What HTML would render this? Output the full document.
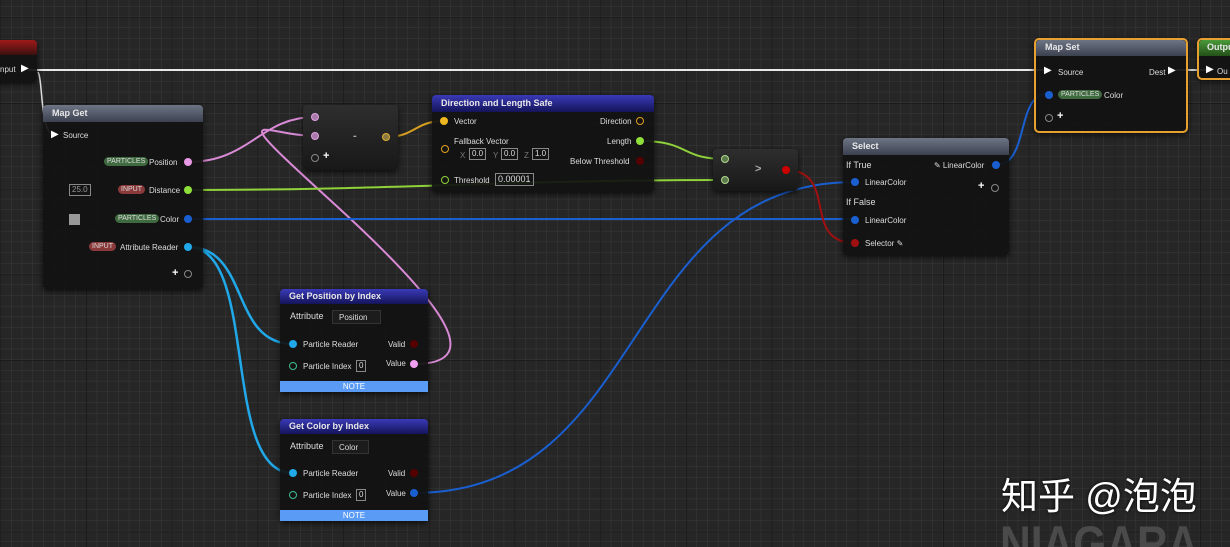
<!DOCTYPE html>
<html><head><meta charset="utf-8"><style>
*{margin:0;padding:0;box-sizing:border-box}
html{width:1230px;height:547px;overflow:hidden}
body{width:1230px;height:547px;overflow:hidden;background:#262626;font-family:"Liberation Sans",sans-serif;position:relative}
svg.bg{position:absolute;left:0;top:0}
.n{position:absolute;background:rgba(18,18,18,.93);border-radius:4px;box-shadow:0 2px 6px rgba(0,0,0,.7);color:#ddd;font-size:8px}
.h{height:17px;border-radius:4px 4px 0 0;font-size:9px;font-weight:bold;color:#e8e8e8;padding:3px 0 0 9px}
.hg{background:linear-gradient(#6d7585,#3c4150)}
.hb{background:linear-gradient(#3a3ab8,#14145a)}
.t{position:absolute;white-space:nowrap;font-size:8px;color:#ddd}
.tag{position:absolute;font-size:7px;border-radius:6px;padding:1px 3px;color:#ddd}
.tg{background:#3f6a3f}.tr{background:#8a3a3a}
.pin{position:absolute;width:8px;height:8px;border-radius:50%}
.box{position:absolute;border:1px solid #888;font-size:8px;color:#ddd;padding:0 2px;height:12px;line-height:10px}
.note{position:absolute;left:0;right:0;height:11px;background:#5a9cf5;color:#fff;font-size:8px;text-align:center;line-height:11px}
</style></head><body>
<svg class="bg" width="1230" height="547">
<defs>
<pattern id="mi" width="10.71" height="10.71" patternUnits="userSpaceOnUse" x="0.3" y="6">
<path d="M0 0H10.71M0 0V10.71" stroke="#3a3a3a" stroke-width="1" fill="none"/></pattern>
<pattern id="ma" width="85.7" height="85.7" patternUnits="userSpaceOnUse" x="0.3" y="17.3">
<path d="M0 0H85.7M0 0V85.7" stroke="#141414" stroke-width="1.3" fill="none"/></pattern>
</defs>
<rect width="1230" height="547" fill="#262626"/>
<rect width="1230" height="547" fill="url(#mi)"/>
<rect width="1230" height="547" fill="url(#ma)"/>
<g fill="none" stroke-width="2">
<path d="M28 70H1045" stroke="#e8e8e8"/>
<path d="M38 72C43 80 40 130 53 135" stroke="#ddd" stroke-width="1.5"/>
<path d="M1176 70H1210" stroke="#ddd"/>
<path d="M188 162C250 162 260 117 315 117" stroke="#d98ad6"/>
<path d="M414 364C490 364 440 300 330 200S265 136 315 136" stroke="#d98ad6"/>
<path d="M386 137C415 137 415 121 444 121" stroke="#d8a020"/>
<path d="M188 190C400 190 500 180 725 180" stroke="#8fd23a"/>
<path d="M640 141C690 141 680 159 725 159" stroke="#8fd23a"/>
<path d="M188 219H855" stroke="#1a5fd0"/>
<path d="M414 493C650 493 620 182 855 182" stroke="#1a5fd0"/>
<path d="M996 165C1030 165 1015 93 1049 93" stroke="#1a5fd0"/>
<path d="M188 247C250 247 230 344 293 344" stroke="#20a8e8" stroke-width="2.5"/>
<path d="M188 247C260 247 220 473 293 473" stroke="#20a8e8" stroke-width="2.5"/>
<path d="M785 170C840 170 800 243 855 243" stroke="#a01010"/>
</g>
</svg>

<div class="n" style="left:-10px;top:40px;width:47px;height:42px"><div class="h" style="background:linear-gradient(#a01a1a,#3a1010);height:15px"></div>
<div class="t" style="left:10px;top:25px">nput</div><div class="t" style="left:31px;top:23px;color:#fff;font-size:10px">▶</div></div>

<div class="n" style="left:43px;top:105px;width:160px;height:184px"><div class="h hg">Map Get</div>
<div class="t" style="left:8px;top:24px;color:#fff;font-size:10px">▶</div><div class="t" style="left:20px;top:26px">Source</div>
<div class="tag tg" style="left:61px;top:52px">PARTICLES</div><div class="t" style="left:106px;top:53px">Position</div><div class="pin" style="left:141px;top:53px;background:#e89ae6"></div>
<div class="box" style="left:26px;top:79px;color:#999">25.0</div>
<div class="tag tr" style="left:75px;top:80px">INPUT</div><div class="t" style="left:106px;top:81px">Distance</div><div class="pin" style="left:141px;top:81px;background:#8fe03a"></div>
<div style="position:absolute;left:26px;top:109px;width:11px;height:11px;background:#999"></div>
<div class="tag tg" style="left:72px;top:109px">PARTICLES</div><div class="t" style="left:117px;top:110px">Color</div><div class="pin" style="left:141px;top:110px;background:#1a5fd0"></div>
<div class="tag tr" style="left:46px;top:137px">INPUT</div><div class="t" style="left:77px;top:138px">Attribute Reader</div><div class="pin" style="left:141px;top:138px;background:#20a8e8"></div>
<div class="t" style="left:129px;top:162px;color:#fff;font-size:11px;font-weight:bold">+</div><div class="pin" style="left:141px;top:165px;border:1px solid #888"></div>
</div>

<div class="n" style="left:303px;top:105px;width:95px;height:65px;background:linear-gradient(#2e2e2e,#181818)">
<div class="pin" style="left:8px;top:8px;background:#a878a8;border:1px solid #e0a0e0"></div>
<div class="pin" style="left:8px;top:27px;background:#a878a8;border:1px solid #e0a0e0"></div>
<div class="t" style="left:50px;top:25px;font-size:11px;font-weight:bold;color:#aaa">-</div>
<div class="pin" style="left:79px;top:28px;background:#8a7840;border:1px solid #e0b030"></div>
<div class="pin" style="left:8px;top:49px;border:1px solid #888"></div><div class="t" style="left:20px;top:45px;color:#fff;font-size:11px;font-weight:bold">+</div>
</div>

<div class="n" style="left:432px;top:95px;width:222px;height:97px"><div class="h hb">Direction and Length Safe</div>
<div class="pin" style="left:8px;top:22px;background:#f0b820"></div><div class="t" style="left:22px;top:22px">Vector</div>
<div class="t" style="left:22px;top:42px">Fallback Vector</div><div class="pin" style="left:9px;top:50px;border:1.5px solid #e0a020"></div>
<div class="t" style="left:28px;top:56px;color:#777">X</div><div class="box" style="left:37px;top:53px">0.0</div>
<div class="t" style="left:61px;top:56px;color:#777">Y</div><div class="box" style="left:69px;top:53px">0.0</div>
<div class="t" style="left:92px;top:56px;color:#777">Z</div><div class="box" style="left:100px;top:53px">1.0</div>
<div class="pin" style="left:9px;top:81px;border:1.5px solid #8fd23a"></div><div class="t" style="left:22px;top:81px">Threshold</div><div class="box" style="left:63px;top:78px;height:13px;font-size:9px">0.00001</div>
<div class="t" style="left:168px;top:22px">Direction</div><div class="pin" style="left:204px;top:22px;border:1.5px solid #e0a020"></div>
<div class="t" style="left:175px;top:42px">Length</div><div class="pin" style="left:204px;top:42px;background:#8fe03a"></div>
<div class="t" style="left:138px;top:62px">Below Threshold</div><div class="pin" style="left:204px;top:62px;background:#500"></div>
</div>

<div class="n" style="left:713px;top:149px;width:85px;height:42px;background:linear-gradient(#2e2e2e,#181818)">
<div class="pin" style="left:8px;top:6px;background:#5a7a4a;border:1px solid #b0d890"></div>
<div class="pin" style="left:8px;top:27px;background:#5a7a4a;border:1px solid #b0d890"></div>
<div class="t" style="left:42px;top:14px;font-size:11px;font-weight:bold;color:#aaa">&gt;</div>
<div class="pin" style="left:69px;top:17px;background:#c00"></div>
</div>

<div class="n" style="left:843px;top:138px;width:166px;height:117px"><div class="h hg">Select</div>
<div class="t" style="left:3px;top:22px;font-size:9px">If True</div>
<div class="pin" style="left:8px;top:40px;background:#1a5fd0"></div><div class="t" style="left:22px;top:40px">LinearColor</div>
<div class="t" style="left:3px;top:59px;font-size:9px">If False</div>
<div class="pin" style="left:8px;top:78px;background:#1a5fd0"></div><div class="t" style="left:22px;top:78px">LinearColor</div>
<div class="pin" style="left:8px;top:101px;background:#a01010"></div><div class="t" style="left:22px;top:101px">Selector ✎</div>
<div class="t" style="left:91px;top:23px">✎ LinearColor</div><div class="pin" style="left:149px;top:23px;background:#1a5fd0"></div>
<div class="t" style="left:135px;top:42px;color:#fff;font-size:11px;font-weight:bold">+</div><div class="pin" style="left:148px;top:46px;border:1px solid #888"></div>
</div>

<div class="n" style="left:1034px;top:38px;width:154px;height:95px;border:2px solid #e8a030;border-radius:5px"><div class="h hg" style="height:16px;padding-top:2px">Map Set</div>
<div class="t" style="left:8px;top:25px;color:#fff;font-size:10px">▶</div><div class="t" style="left:22px;top:28px">Source</div>
<div class="t" style="left:113px;top:28px">Dest</div><div class="t" style="left:132px;top:25px;color:#fff;font-size:10px">▶</div>
<div class="pin" style="left:9px;top:51px;background:#1a5fd0"></div><div class="tag tg" style="left:22px;top:50px">PARTICLES</div><div class="t" style="left:68px;top:51px">Color</div>
<div class="pin" style="left:9px;top:74px;border:1px solid #888"></div><div class="t" style="left:21px;top:70px;color:#fff;font-size:11px;font-weight:bold">+</div>
</div>

<div class="n" style="left:1197px;top:38px;width:40px;height:42px;border:2px solid #e8a030;border-radius:5px"><div class="h" style="background:linear-gradient(#4a9a3a,#245018);height:16px;padding:2px 0 0 8px">Outpu</div>
<div class="t" style="left:7px;top:24px;color:#fff;font-size:10px">▶</div><div class="t" style="left:18px;top:27px">Ou</div></div>

<div class="n" style="left:280px;top:289px;width:148px;height:103px"><div class="h hb" style="height:15px;padding-top:2px">Get Position by Index</div>
<div class="t" style="left:10px;top:22px;font-size:9px">Attribute</div><div class="box" style="left:52px;top:21px;height:14px;width:49px;border-color:#333;background:#1c1c1c;padding:2px 6px">Position</div>
<div class="pin" style="left:9px;top:51px;background:#20a8e8"></div><div class="t" style="left:23px;top:51px">Particle Reader</div>
<div class="pin" style="left:9px;top:73px;border:1.5px solid #40c090"></div><div class="t" style="left:23px;top:73px">Particle Index</div><div class="box" style="left:76px;top:71px">0</div>
<div class="t" style="left:108px;top:51px">Valid</div><div class="pin" style="left:130px;top:51px;background:#500"></div>
<div class="t" style="left:106px;top:70px">Value</div><div class="pin" style="left:130px;top:71px;background:#f0a0ee"></div>
<div class="note" style="top:92px">NOTE</div>
</div>

<div class="n" style="left:280px;top:419px;width:148px;height:102px"><div class="h hb" style="height:15px;padding-top:2px">Get Color by Index</div>
<div class="t" style="left:10px;top:22px;font-size:9px">Attribute</div><div class="box" style="left:52px;top:21px;height:14px;width:37px;border-color:#333;background:#1c1c1c;padding:2px 6px">Color</div>
<div class="pin" style="left:9px;top:50px;background:#20a8e8"></div><div class="t" style="left:23px;top:50px">Particle Reader</div>
<div class="pin" style="left:9px;top:72px;border:1.5px solid #40c090"></div><div class="t" style="left:23px;top:72px">Particle Index</div><div class="box" style="left:76px;top:70px">0</div>
<div class="t" style="left:108px;top:50px">Valid</div><div class="pin" style="left:130px;top:50px;background:#500"></div>
<div class="t" style="left:106px;top:70px">Value</div><div class="pin" style="left:130px;top:70px;background:#1a5fd0"></div>
<div class="note" style="top:91px">NOTE</div>
</div>

<div style="position:absolute;left:0;top:0;width:1230px;height:547px;overflow:hidden;pointer-events:none">
<div style="position:absolute;left:1000px;top:516px;font-size:50px;line-height:56px;font-weight:bold;color:#4a4a4a;font-family:'Liberation Sans',sans-serif;white-space:nowrap;transform:scaleX(0.85);transform-origin:0 0">NIAGARA</div>
<div style="position:absolute;left:1001px;top:475px;font-size:37px;line-height:44px;color:#fff;font-family:'Liberation Sans','Noto Sans CJK SC',sans-serif;text-shadow:0 0 3px #000;white-space:nowrap">知乎 @泡泡</div>
</div>
</body></html>
